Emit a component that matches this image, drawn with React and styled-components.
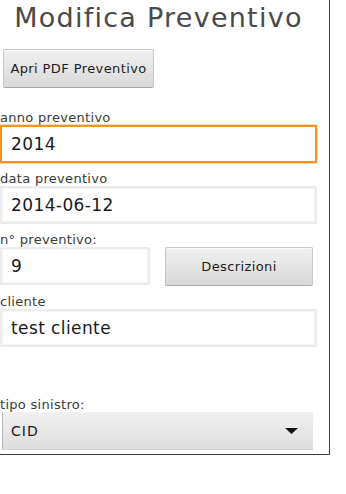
import React from "react";
import styled, { createGlobalStyle } from "styled-components";

const Global = createGlobalStyle`
  html, body { margin: 0; padding: 0; background: #fff; }
  body { font-family: "DejaVu Sans", "Noto Sans", sans-serif; }
`;

const Frame = styled.div`
  box-sizing: border-box;
  width: 330px;
  height: 455px;
  border-right: 1px solid #3c3c3c;
  border-bottom: 1px solid #3c3c3c;
  box-shadow: 0 2px 0 #d4cde8;
  display: flex;
  flex-direction: column;
  padding-bottom: 4px;
`;

const Column = styled.div`
  width: 317px;
  display: flex;
  flex-direction: column;
`;

const Title = styled.h1`
  margin: 2px 0 0;
  font-size: 27px;
  line-height: 31px;
  font-weight: 400;
  color: #4a4a4a;
  text-align: center;
  letter-spacing: 1.25px;
  white-space: nowrap;
`;

const Button = styled.button`
  box-sizing: border-box;
  height: 39px;
  width: ${(p) => p.$w}px;
  margin-left: ${(p) => p.$ml || 0}px;
  border: 1px solid #c6c6c6;
  border-bottom-color: #a8a8a8;
  border-radius: 2px;
  background: linear-gradient(#f0f0f0, #d9d9d9);
  box-shadow: inset 0 1px 0 #fafafa;
  font-family: "DejaVu Sans", sans-serif;
  font-size: 13px;
  letter-spacing: 0.4px;
  color: #1c1c1c;
  padding: 0;
`;

const TopButtonRow = styled.div`
  margin-top: 16px;
  display: flex;
`;

const Field = styled.div`
  display: flex;
  flex-direction: column;
  margin-top: ${(p) => p.$mt}px;
`;

const Label = styled.div`
  font-size: 13px;
  line-height: 14px;
  height: 14px;
  letter-spacing: 0.3px;
  color: #3a3a3a;
  white-space: nowrap;
`;

const Input = styled.div`
  box-sizing: border-box;
  height: 38px;
  width: ${(p) => p.$w || 317}px;
  border: 2px solid ${(p) => (p.$focus ? "#f7941d" : "#ececec")};
  box-shadow: ${(p) =>
    p.$focus ? "0 0 0 1px rgba(247,148,29,0.35)" : "inset 0 0 0 1px #f6f6f6"};
  background: #fff;
  border-radius: 1px;
  display: flex;
  align-items: center;
  padding-left: 9px;
  font-size: 17px;
  letter-spacing: 0.4px;
  color: #1a1a1a;
`;

const Row = styled.div`
  display: flex;
  align-items: flex-start;
`;

const Spinner = styled.div`
  box-sizing: border-box;
  height: 38px;
  width: 311px;
  margin-left: 2px;
  border-left: 1px solid #b8b8b8;
  border-bottom: 1px solid #d0d0d0;
  background: linear-gradient(#f1f1f1, #dedede);
  display: flex;
  align-items: center;
  justify-content: space-between;
  padding: 0 15px 0 8px;
  font-size: 14px;
  letter-spacing: 1px;
  color: #1a1a1a;
`;

const Spacer = styled.div`
  flex: 1;
`;

const Arrow = () => (
  <svg width="13" height="6" viewBox="0 0 13 6">
    <path d="M0 0 H13 L6.5 6 Z" fill="#111" />
  </svg>
);

export default function App() {
  return (
    <>
      <Global />
      <Frame>
        <Column>
          <Title>Modifica Preventivo</Title>
          <TopButtonRow>
            <Button $w={151} $ml={3}>Apri PDF Preventivo</Button>
          </TopButtonRow>
          <Field $mt={23}>
            <Label>anno preventivo</Label>
            <Input $focus>2014</Input>
          </Field>
          <Field $mt={9}>
            <Label>data preventivo</Label>
            <Input>2014-06-12</Input>
          </Field>
          <Field $mt={9}>
            <Label>n° preventivo:</Label>
            <Row>
              <Input $w={150}>9</Input>
              <Button $w={148} $ml={15}>Descrizioni</Button>
            </Row>
          </Field>
          <Field $mt={9}>
            <Label>cliente</Label>
            <Input>test cliente</Input>
          </Field>
        </Column>
        <Spacer />
        <Column>
          <Field $mt={0}>
            <Label>tipo sinistro:</Label>
            <Spinner>
              <span>CID</span>
              <Arrow />
            </Spinner>
          </Field>
        </Column>
      </Frame>
    </>
  );
}
